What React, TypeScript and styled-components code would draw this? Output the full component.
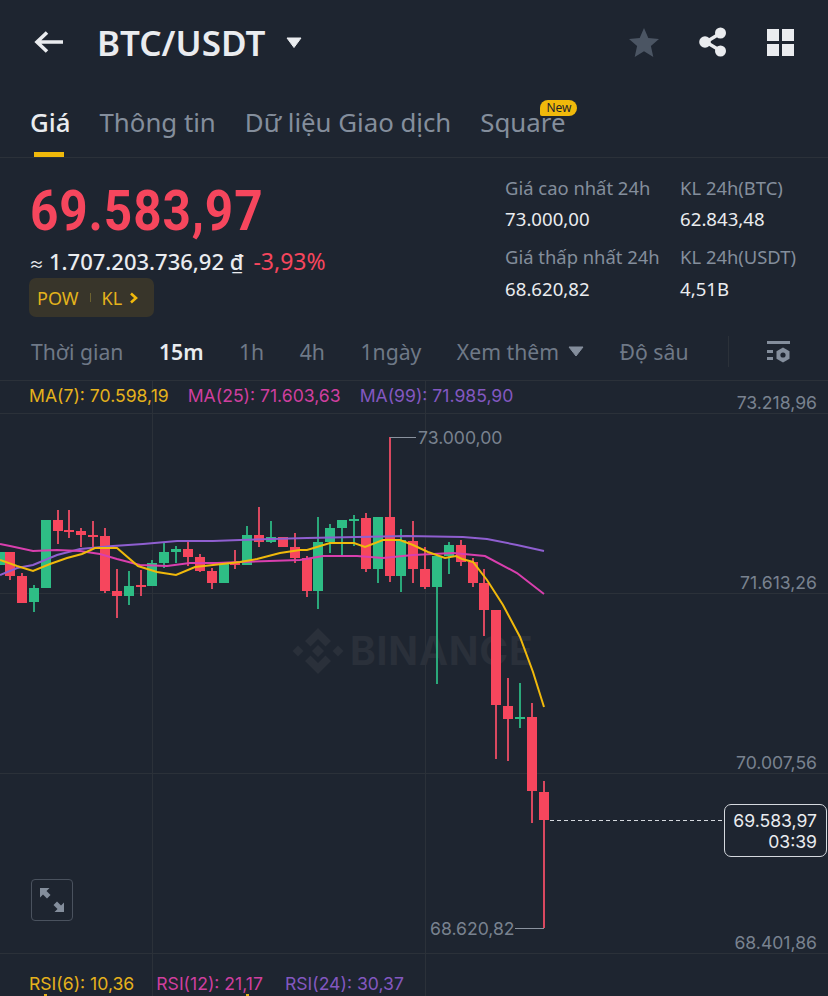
import styled, { createGlobalStyle } from "styled-components";

const GlobalStyle = createGlobalStyle`
  html, body {
    margin: 0;
    padding: 0;
    background: #1e2530;
  }
`;

const RED = "#f6465d";
const GREEN = "#2ebd85";
const YELLOW = "#f0b90b";
const GRAY = "#848e9c";
const SANS = `"Noto Sans", "Noto Sans CJK SC", sans-serif`;
const UI = `Inter, "Liberation Sans", sans-serif`;

// [x, open/top of body, bottom of body, wick top, wick bottom, up?]
type Candle = [number, number, number, number, number, boolean];

const candles: Candle[] = [
  [1, 552, 565, 552, 565, true],
  [10, 552, 576, 552, 580, false],
  [22, 576, 603, 573, 603, false],
  [34, 588, 602, 585, 612, true],
  [46, 520, 588, 520, 588, true],
  [58, 520, 531, 510, 544, false],
  [69, 530, 532, 510, 538, false],
  [81, 531, 535, 528, 547, false],
  [93, 535, 537, 521, 547, false],
  [105, 536, 591, 528, 593, false],
  [117, 591, 596, 569, 618, false],
  [129, 586, 596, 571, 605, true],
  [141, 585, 587, 570, 596, false],
  [152, 563, 586, 560, 586, true],
  [164, 552, 563, 543, 568, true],
  [176, 549, 552, 546, 563, true],
  [188, 549, 557, 542, 566, false],
  [200, 557, 571, 554, 572, false],
  [212, 571, 583, 568, 589, false],
  [224, 564, 583, 564, 583, true],
  [235, 563, 565, 550, 569, false],
  [247, 535, 565, 526, 565, true],
  [259, 535, 542, 507, 547, false],
  [271, 537, 542, 521, 543, true],
  [283, 537, 547, 537, 547, false],
  [295, 547, 558, 533, 563, false],
  [307, 558, 591, 556, 597, false],
  [318, 542, 591, 517, 609, true],
  [330, 528, 542, 524, 553, true],
  [342, 520, 528, 520, 555, true],
  [354, 519, 520, 515, 546, true],
  [366, 518, 569, 513, 572, false],
  [378, 517, 569, 517, 583, true],
  [390, 517, 576, 437, 582, false],
  [401, 540, 576, 529, 592, true],
  [413, 541, 569, 521, 583, false],
  [425, 569, 587, 547, 589, false],
  [437, 556, 587, 553, 684, true],
  [449, 545, 556, 542, 574, true],
  [461, 545, 562, 540, 566, false],
  [473, 562, 583, 558, 587, false],
  [484, 583, 610, 569, 636, false],
  [496, 610, 705, 610, 759, false],
  [508, 706, 719, 678, 761, false],
  [520, 717, 719, 683, 728, true],
  [532, 717, 791, 703, 823, false],
  [544, 792, 820, 781, 928, false],
];

const ma7 =
  "0,560 17,566 33,571 50,564 67,558 82,554 95,548 117,548 138,566 157,572 176,575 195,567 213,565 240,562 257,559 280,553 300,550 307,550 330,543 354,543 365,547 383,540 400,540 413,545 428,552 445,558 456,556 462,559 473,562 487,580 503,605 520,637 533,672 544,707";
const ma25 =
  "0,544 10,546 33,551 57,550 80,551 100,554 117,559 140,565 167,566 190,563 217,563 240,562 300,560 323,556 357,556 383,558 413,555 453,553 485,556 517,573 544,594";
const ma99 =
  "0,575 17,568 33,565 57,555 80,549 113,546 143,544 177,541 213,541 240,540 307,538 357,537 407,536 463,537 487,539 517,545 544,551";

const Page = styled.div`
  width: 828px;
  height: 996px;
  overflow: hidden;
  background: #1e2530;
  font-family: ${SANS};
`;

const Header = styled.header`
  height: 84px;
  display: flex;
  align-items: center;
  padding: 0 34px;
  box-sizing: border-box;
`;

const Title = styled.h1`
  margin: 0 21px 0 33px;
  color: #eaecef;
  font-size: 35px;
  font-weight: 600;
  line-height: 1;
`;

const HeaderActions = styled.div`
  margin-left: auto;
  display: flex;
  align-items: center;
  gap: 40px;
`;

const Tabs = styled.nav`
  height: 74px;
  display: flex;
  gap: 29px;
  padding: 0 30px;
  border-bottom: 1px solid #2b3139;
  box-sizing: border-box;
`;

const Tab = styled.div<{ $active?: boolean }>`
  position: relative;
  padding-top: 19px;
  font-size: 25.8px;
  line-height: 38px;
  font-weight: ${(p) => (p.$active ? 500 : 400)};
  color: ${(p) => (p.$active ? "#eaecef" : GRAY)};

  ${(p) =>
    p.$active &&
    `&::after {
      content: "";
      position: absolute;
      left: 4px;
      bottom: 0;
      width: 30px;
      height: 5px;
      background: ${YELLOW};
    }`}
`;

const NewBadge = styled.span`
  position: absolute;
  top: 16px;
  right: -12px;
  padding: 0 6px;
  height: 16px;
  border-radius: 8px 8px 8px 2px;
  background: ${YELLOW};
  color: #1e2329;
  font-size: 12px;
  line-height: 16px;
`;

const Stats = styled.section`
  height: 164px;
  display: flex;
  justify-content: space-between;
  padding: 0 32px 0 30px;
  box-sizing: border-box;
`;

const PriceBlock = styled.div`
  display: flex;
  flex-direction: column;
  align-items: flex-start;
`;

const Price = styled.div`
  margin-top: 21px;
  color: ${RED};
  font-family: Roboto, sans-serif;
  font-size: 55px;
  font-weight: 700;
  line-height: 64px;
  letter-spacing: 1px;
  transform: scaleX(0.9);
  transform-origin: left center;
`;

const SubPrice = styled.div`
  margin: 1px 0 0 -1px;
  display: flex;
  gap: 10px;
  font-size: 22px;
  line-height: 34px;
  font-weight: 500;
  color: #eaecef;
`;

const Approx = styled.span`
  margin-right: 5px;
  font-size: 15px;
`;

const Change = styled.span`
  color: ${RED};
  font-size: 23px;
  font-weight: 400;
`;

const TagPill = styled.div`
  margin: -3px 0 0 -1px;
  height: 39px;
  width: 125px;
  box-sizing: border-box;
  padding: 0 8px;
  display: flex;
  align-items: center;
  border-radius: 7px;
  background: #38352a;
  color: #e4b31c;
  font-size: 18px;
`;

const TagDivider = styled.span`
  width: 1px;
  height: 9px;
  margin: 0 11px;
  background: #6d6230;
`;

const TagChevron = styled.svg`
  margin-left: 6px;
  flex: none;
`;

const StatsGrid = styled.div`
  display: grid;
  grid-template-columns: 175px auto;
  grid-template-rows: 30px 39px 31px 31px;
  margin-top: 15px;
  align-content: start;
`;

const StatLabel = styled.div`
  color: ${GRAY};
  font-size: 18.4px;
  line-height: 30px;
  white-space: nowrap;
`;

const StatValue = styled.div`
  color: #eaecef;
  font-size: 18.6px;
  line-height: 31px;
`;

const Intervals = styled.div`
  height: 59px;
  display: flex;
  align-items: center;
  gap: 35.5px;
  padding-left: 31px;
  border-bottom: 1px solid #2b3139;
  box-sizing: border-box;
`;

const Interval = styled.div<{ $active?: boolean }>`
  display: flex;
  align-items: center;
  gap: 9px;
  font-size: 21.2px;
  font-weight: ${(p) => (p.$active ? 600 : 400)};
  color: ${(p) => (p.$active ? "#eaecef" : "#6f7987")};
  white-space: nowrap;
`;

const IntervalDivider = styled.span`
  flex: none;
  width: 1px;
  height: 31px;
  margin: 0 2px 0 4px;
  background: #2b3139;
`;

const Chart = styled.div`
  position: relative;
  height: 615px;
`;

const ChartSvg = styled.svg`
  display: block;
`;

const LegendRow = styled.div<{ $gap: number; $top: number }>`
  position: absolute;
  left: 29px;
  top: ${(p) => p.$top}px;
  display: flex;
  gap: ${(p) => p.$gap}px;
  font-family: ${UI};
  font-size: 17.6px;
  line-height: 22px;
`;

const LegendItem = styled.span<{ $color: string }>`
  color: ${(p) => p.$color};
  white-space: nowrap;
`;

const LastPriceTag = styled.div`
  position: absolute;
  left: 724px;
  top: 423px;
  width: 103px;
  height: 53px;
  box-sizing: border-box;
  padding: 5px 9px 0 0;
  border: 1.5px solid #d5d9de;
  border-radius: 7px;
  background: #1e2530;
  color: #eaecef;
  font-family: ${UI};
  font-size: 17.6px;
  line-height: 21px;
  text-align: right;
`;

const ExpandButton = styled.div`
  position: absolute;
  left: 31px;
  top: 498px;
  width: 42px;
  height: 42px;
  box-sizing: border-box;
  display: flex;
  align-items: center;
  justify-content: center;
  border: 1.5px solid #4a525e;
  border-radius: 4px;
`;

const AxisText = styled.text`
  font-family: ${UI};
  font-size: 17.6px;
  fill: #79828f;
`;

const Watermark = styled.text`
  font-family: ${UI};
  font-size: 39px;
  font-weight: 700;
  letter-spacing: 0.8px;
  fill: #2a303a;
`;

const IconSvg = styled.svg`
  display: block;
  flex: none;
`;

function Icon({ w, h, children }: { w: number; h: number; children: React.ReactNode }) {
  return (
    <IconSvg width={w} height={h} viewBox={`0 0 ${w} ${h}`} fill="none">
      {children}
    </IconSvg>
  );
}

function CandleMark({ c }: { c: Candle }) {
  const [x, top, bottom, wickTop, wickBottom, up] = c;
  const color = up ? GREEN : RED;
  const wickColor = up ? "#2aa87a" : "#d9485f";
  return (
    <g>
      <rect x={x - 1} y={wickTop} width={2} height={wickBottom - wickTop} fill={wickColor} />
      <rect x={x - 5} y={top} width={10} height={Math.max(bottom - top, 2)} fill={color} />
    </g>
  );
}

function BinanceLogo() {
  return (
    <g fill="#2a303a">
      <path d="M318 628l13 13-5.500 5.500-7.500-7.500-7.500 7.500-5.500-5.500z" />
      <path d="M318 674l13-13-5.500-5.500-7.500 7.500-7.500-7.500-5.500 5.500z" />
      <path d="M298 645.500l5.500 5.500-5.500 5.500-5.500-5.500z" />
      <path d="M338 645.500l5.500 5.500-5.500 5.500-5.500-5.500z" />
      <path d="M318 645l6 6-6 6-6-6z" />
    </g>
  );
}

function PriceChart() {
  return (
    <ChartSvg width={828} height={615} viewBox="0 381 828 615" fill="none">
      <g stroke="#2b3139" strokeWidth={1}>
        <path d="M0 413.500H828M0 593.500H828M0 773.500H828M0 953.500H828" />
        <path d="M152.500 381V996M425.500 381V996" />
      </g>

      <BinanceLogo />
      <Watermark x={350} y={665}>
        BINANCE
      </Watermark>

      {candles.map((c) => (
        <CandleMark key={c[0]} c={c} />
      ))}

      <polyline points={ma99} stroke="#8f5fd0" strokeWidth={2} />
      <polyline points={ma25} stroke="#d93fae" strokeWidth={2} />
      <polyline points={ma7} stroke="#f0b90b" strokeWidth={2} />

      <path d="M390 437.500H416M515 928.500H544" stroke="#8a929e" strokeWidth={1} />
      <path d="M550 820.500H723" stroke="#d5d9de" strokeWidth={1} strokeDasharray="4 3" />

      <AxisText x={418} y={444}>
        73.000,00
      </AxisText>
      <AxisText x={430} y={935}>
        68.620,82
      </AxisText>
      <AxisText x={817} y={409} textAnchor="end">
        73.218,96
      </AxisText>
      <AxisText x={817} y={589} textAnchor="end">
        71.613,26
      </AxisText>
      <AxisText x={817} y={769} textAnchor="end">
        70.007,56
      </AxisText>
      <AxisText x={817} y={949} textAnchor="end">
        68.401,86
      </AxisText>

      {/* tops of the rsi plot, cut off by the screen edge */}
      <path d="M44 994h3v2h-3zM246 994h3v2h-3z" fill="#e5b21c" />
    </ChartSvg>
  );
}

export default function App() {
  return (
    <Page>
      <GlobalStyle />
      <Header>
        <Icon w={30} h={24}>
          <path d="M29 12H4M13 2.500L3 12l10 9.500" stroke="#eaecef" strokeWidth={3.6} />
        </Icon>
        <Title>BTC/USDT</Title>
        <Icon w={16} h={11}>
          <path d="M1 1h14l-7 9.500z" fill="#eaecef" stroke="#eaecef" strokeLinejoin="round" />
        </Icon>
        <HeaderActions>
          <Icon w={30} h={29}>
            <path
              d="M15 0l4.300 10 10.700 1-8.100 7 2.400 11-9.300-5.700L5.700 29l2.400-11L0 11l10.700-1z"
              fill="#4b5563"
            />
          </Icon>
          <Icon w={28} h={30}>
            <path d="M21 6.500L7 15l14 8.500" stroke="#eaecef" strokeWidth={3.4} />
            <circle cx={21.500} cy={6} r={5.500} fill="#eaecef" />
            <circle cx={6} cy={15} r={5.800} fill="#eaecef" />
            <circle cx={21.500} cy={24} r={5.500} fill="#eaecef" />
          </Icon>
          <Icon w={27} h={27}>
            <path d="M0 0h12v12H0zM15 0h12v12H15zM0 15h12v12H0zM15 15h12v12H15z" fill="#eaecef" />
          </Icon>
        </HeaderActions>
      </Header>

      <Tabs>
        <Tab $active>Giá</Tab>
        <Tab>Thông tin</Tab>
        <Tab>Dữ liệu Giao dịch</Tab>
        <Tab>
          Square
          <NewBadge>New</NewBadge>
        </Tab>
      </Tabs>

      <Stats>
        <PriceBlock>
          <Price>69.583,97</Price>
          <SubPrice>
            <span>
              <Approx>≈</Approx>1.707.203.736,92 ₫
            </span>
            <Change>-3,93%</Change>
          </SubPrice>
          <TagPill>
            POW
            <TagDivider />
            KL
            <TagChevron width={12} height={14} viewBox="0 0 12 14" fill="none">
              <path d="M3 2.500L8 7l-5 4.500" stroke="#f0b90b" strokeWidth={2.600} />
            </TagChevron>
          </TagPill>
        </PriceBlock>
        <StatsGrid>
          <StatLabel>Giá cao nhất 24h</StatLabel>
          <StatLabel>KL 24h(BTC)</StatLabel>
          <StatValue>73.000,00</StatValue>
          <StatValue>62.843,48</StatValue>
          <StatLabel>Giá thấp nhất 24h</StatLabel>
          <StatLabel>KL 24h(USDT)</StatLabel>
          <StatValue>68.620,82</StatValue>
          <StatValue>4,51B</StatValue>
        </StatsGrid>
      </Stats>

      <Intervals>
        <Interval>Thời gian</Interval>
        <Interval $active>15m</Interval>
        <Interval>1h</Interval>
        <Interval>4h</Interval>
        <Interval>1ngày</Interval>
        <Interval>
          Xem thêm
          <Icon w={16} h={11}>
            <path d="M1 1h14l-7 9z" fill="#848e9c" stroke="#848e9c" strokeLinejoin="round" />
          </Icon>
        </Interval>
        <Interval>Độ sâu</Interval>
        <IntervalDivider />
        <Icon w={25} h={25}>
          <path d="M1 2h23v3H1zM1 11h6v3H1zM1 18h6v3H1z" fill="#848e9c" />
          <path d="M17 8.500l6.500 3.800v7.400L17 23.500l-6.500-3.800v-7.400z" fill="#848e9c" />
          <circle cx={17} cy={16} r={2.600} fill="#1e2530" />
        </Icon>
      </Intervals>

      <Chart>
        <PriceChart />
        <LegendRow $gap={19} $top={4}>
          <LegendItem $color="#e5b21c">MA(7): 70.598,19</LegendItem>
          <LegendItem $color="#cf3f9f">MA(25): 71.603,63</LegendItem>
          <LegendItem $color="#8358c0">MA(99): 71.985,90</LegendItem>
        </LegendRow>
        <LegendRow $gap={22} $top={592}>
          <LegendItem $color="#e5b21c">RSI(6): 10,36</LegendItem>
          <LegendItem $color="#cf3f9f">RSI(12): 21,17</LegendItem>
          <LegendItem $color="#8358c0">RSI(24): 30,37</LegendItem>
        </LegendRow>
        <LastPriceTag>
          69.583,97
          <br />
          03:39
        </LastPriceTag>
        <ExpandButton>
          <Icon w={26} h={26}>
            <path d="M1 1h9.500L7.500 4l4 4-3.500 3.500-4-4L1 10.500z" fill="#848e9c" />
            <path d="M25 25h-9.500l3-3-4-4 3.500-3.500 4 4 3-3z" fill="#848e9c" />
          </Icon>
        </ExpandButton>
      </Chart>
    </Page>
  );
}
